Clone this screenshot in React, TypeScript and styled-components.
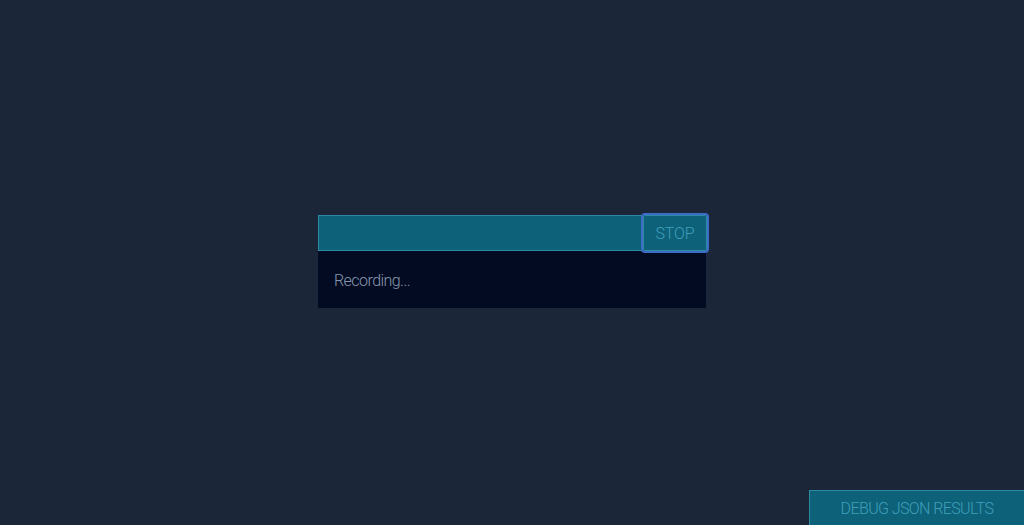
import React from "react";
import styled, { createGlobalStyle } from "styled-components";

const Global = createGlobalStyle`
  html, body { margin: 0; padding: 0; height: 100%; }
  body {
    background: #1b2739;
    font-family: "Roboto", "Open Sans", sans-serif;
    overflow: hidden;
  }
  #root { height: 100%; }
`;

const Page = styled.main`
  height: 100vh;
  display: flex;
  align-items: center;
  justify-content: center;
  padding-bottom: 3px;
  box-sizing: border-box;
`;

const Widget = styled.section`
  display: flex;
  flex-direction: column;
  width: 389px;
  margin-left: 1px;
`;

const Bar = styled.div`
  display: flex;
  height: 36px;
`;

const Input = styled.input`
  flex: 1;
  min-width: 0;
  height: 36px;
  box-sizing: border-box;
  margin: 0;
  background: #0d6179;
  border: 1px solid #2d8aa3;
  border-right: none;
  outline: none;
  color: #cfe6ee;
  padding: 0 12px;
  font: inherit;
`;

const StopButton = styled.button`
  width: 64px;
  height: 36px;
  box-sizing: border-box;
  margin: 0;
  background: #0d6179;
  border: 1px solid #2f8ba4;
  outline: 2px solid #3a6cc8;
  outline-offset: 0;
  border-radius: 2px;
  color: #3f9fba;
  font-family: "Roboto", sans-serif;
  font-weight: 300;
  font-size: 16px;
  letter-spacing: -0.1px;
  cursor: pointer;
  padding: 2px 0 0 0;
  position: relative;
  z-index: 1;
`;

const Panel = styled.div`
  width: 388px;
  height: 57px;
  background: #020b22;
  display: flex;
  align-items: center;
  padding: 0 16px;
  box-sizing: border-box;
`;

const Status = styled.span`
  color: #8798ae;
  font-family: "Roboto", sans-serif;
  font-weight: 300;
  font-size: 16px;
  letter-spacing: -0.55px;
  margin-top: 3px;
`;

const DebugButton = styled.button`
  position: fixed;
  right: 0;
  bottom: -2px;
  width: 215px;
  height: 37px;
  box-sizing: border-box;
  background: #0d6179;
  border: 1px solid #2d8aa3;
  border-right: none;
  color: #3f9fba;
  font-family: "Roboto", sans-serif;
  font-weight: 300;
  font-size: 16px;
  letter-spacing: -0.6px;
  padding: 0;
  cursor: pointer;
`;

export default function App() {
  return (
    <>
      <Global />
      <Page>
        <Widget>
          <Bar>
            <Input aria-label="speech" readOnly />
            <StopButton>STOP</StopButton>
          </Bar>
          <Panel>
            <Status>Recording...</Status>
          </Panel>
        </Widget>
      </Page>
      <DebugButton>DEBUG JSON RESULTS</DebugButton>
    </>
  );
}
